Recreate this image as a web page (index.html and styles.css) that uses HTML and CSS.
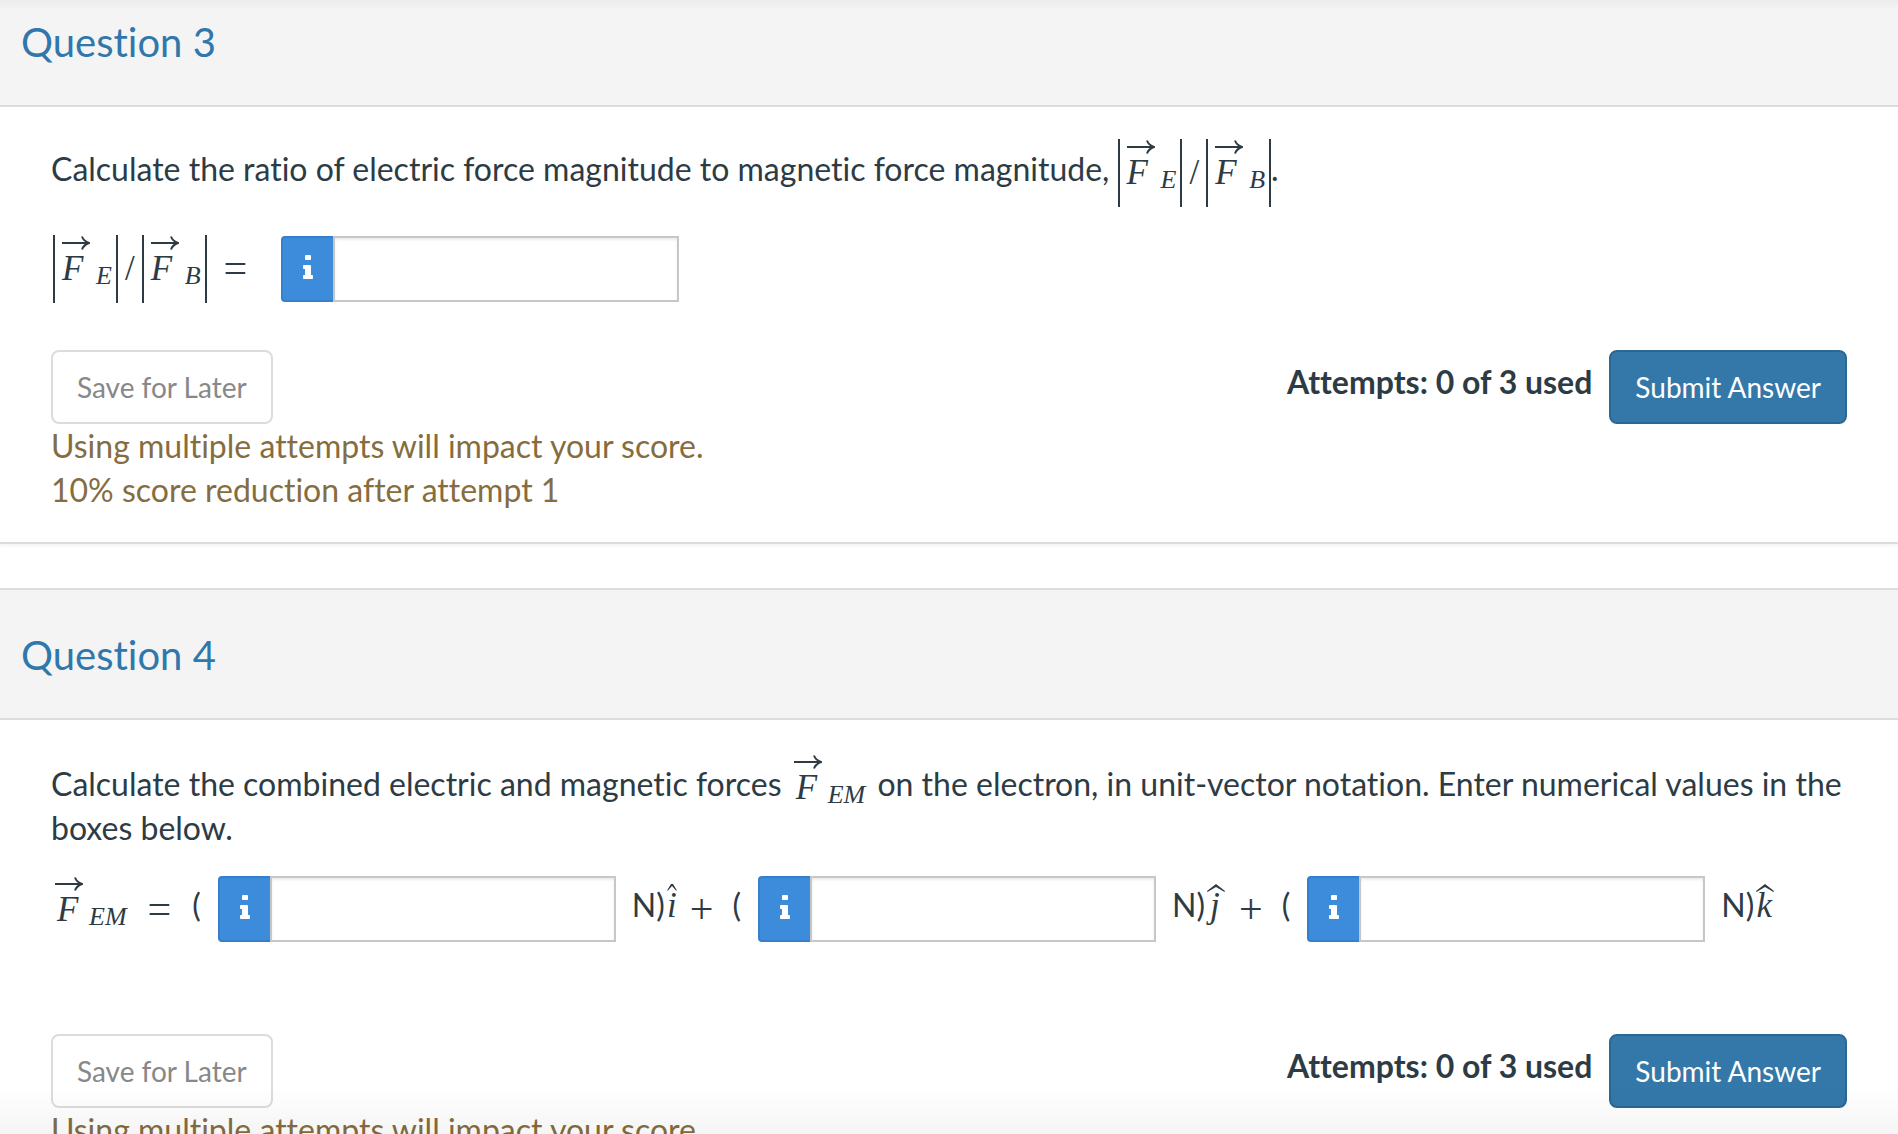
FILE: index.html
```html
<!DOCTYPE html>
<html lang="en">
<head>
  <meta charset="UTF-8" />
  <meta name="viewport" content="width=device-width, initial-scale=1.0" />
  <title>Assignment Questions</title>
  <link rel="stylesheet" href="styles.css">
</head>
<body>
  <!-- shared shapes -->
  <svg class="sprite" aria-hidden="true">
    <symbol id="arrow" viewBox="0 0 28 14">
      <path d="M0 7H26.5M20 .5Q21.500 5 27 7Q21.500 9 20 13.5" fill="none" stroke="currentColor" stroke-width="2" />
    </symbol>
    <symbol id="hat-wide" viewBox="0 0 18 8">
      <path d="M0 7L9 0L18 7L17.5 8L9 3L.5 8Z" fill="currentColor" />
    </symbol>
    <symbol id="hat" viewBox="0 0 10 7">
      <path d="M0 6.5L4 0H6L10 6.5H9L5 2L1 6.5Z" fill="currentColor" />
    </symbol>
    <symbol id="info" viewBox="0 0 640 1536">
      <path fill="currentColor" d="M640 1344v128q0 26-19 45t-45 19h-512q-26 0-45-19t-19-45v-128q0-26 19-45t45-19h64v-384h-64q-26 0-45-19t-19-45v-128q0-26 19-45t45-19h384q26 0 45 19t19 45v576h64q26 0 45 19t19 45zM512 64v192q0 26-19 45t-45 19h-256q-26 0-45-19t-19-45v-192q0-26 19-45t45-19h256q26 0 45 19t19 45z" />
    </symbol>
  </svg>

  <main class="questions">
    <section class="question">
      <header class="question-header first">
        <h2>Question 3</h2>
      </header>
      <div class="question-body ratio">
        <p class="prompt">Calculate the ratio of electric force magnitude to magnetic force magnitude, <span class="math"><span class="abs"><span class="vec">F<svg><use href="#arrow" /></svg></span><sub>E</sub></span><span class="slash">/</span><span class="abs"><span class="vec">F<svg><use href="#arrow" /></svg></span><sub>B</sub></span></span>.</p>

        <div class="answer-row">
          <span class="math"><span class="abs"><span class="vec">F<svg><use href="#arrow" /></svg></span><sub>E</sub></span><span class="slash">/</span><span class="abs"><span class="vec">F<svg><use href="#arrow" /></svg></span><sub>B</sub></span><span class="op equals">=</span></span>
          <span class="field">
            <button type="button" class="info-btn" aria-label="Answer format"><svg><use href="#info" /></svg></button>
            <input type="text" aria-label="Ratio of force magnitudes">
          </span>
        </div>

        <div class="actions">
          <button type="button" class="btn btn-save">Save for Later</button>
          <div class="submit">
            <span class="attempts">Attempts: 0 of 3 used</span>
            <button type="button" class="btn btn-submit">Submit Answer</button>
          </div>
        </div>
        <p class="warning">Using multiple attempts will impact your score.<br>10% score reduction after attempt 1</p>
      </div>
    </section>

    <section class="question">
      <header class="question-header">
        <h2>Question 4</h2>
      </header>
      <div class="question-body vector">
        <p class="prompt">Calculate the combined electric and magnetic forces <span class="math"><span class="vec wide">F<svg><use href="#arrow" /></svg></span><sub>EM</sub></span> on the electron, in unit-vector notation. Enter numerical values in the boxes below.</p>

        <div class="answer-row">
          <span class="math"><span class="vec wide">F<svg><use href="#arrow" /></svg></span><sub>EM</sub><span class="op equals">=</span></span>
          <span class="paren">(</span>
          <span class="field">
            <button type="button" class="info-btn" aria-label="i component format"><svg><use href="#info" /></svg></button>
            <input type="text" aria-label="i component in newtons">
          </span>
          <span class="unit">N)<span class="unit-vec">i<svg class="narrow"><use href="#hat" /></svg></span></span>
          <span class="math"><span class="op">+</span></span>
          <span class="paren">(</span>
          <span class="field">
            <button type="button" class="info-btn" aria-label="j component format"><svg><use href="#info" /></svg></button>
            <input type="text" aria-label="j component in newtons">
          </span>
          <span class="unit">N)<span class="unit-vec wide">j<svg><use href="#hat-wide" /></svg></span></span>
          <span class="math"><span class="op">+</span></span>
          <span class="paren">(</span>
          <span class="field">
            <button type="button" class="info-btn" aria-label="k component format"><svg><use href="#info" /></svg></button>
            <input type="text" aria-label="k component in newtons">
          </span>
          <span class="unit">N)<span class="unit-vec wide">k<svg><use href="#hat-wide" /></svg></span></span>
        </div>

        <div class="actions">
          <button type="button" class="btn btn-save">Save for Later</button>
          <div class="submit">
            <span class="attempts">Attempts: 0 of 3 used</span>
            <button type="button" class="btn btn-submit">Submit Answer</button>
          </div>
        </div>
        <p class="warning">Using multiple attempts will impact your score.<br>10% score reduction after attempt 1</p>
      </div>
    </section>
  </main>
  <div class="bottom-shade"></div>
</body>
</html>
```
FILE: styles.css
```css
* {
  box-sizing: border-box;
}

body {
  margin: 0;
  background: #fff;
  color: #2d3b45;
  font-family: Lato, "Open Sans", sans-serif;
  font-size: 32px;
  line-height: 44px;
  font-variant-ligatures: none;
}

.sprite {
  display: block;
  width: 0;
  height: 0;
}

.questions {
  height: 100vh;
  overflow-y: auto;
  scrollbar-width: none;
}

.question {
  margin-bottom: 44px;
  border-bottom: 2px solid #dcdcdc;
  box-shadow: 0 2px 3px rgba(0, 0, 0, 0.05);
}

.question-header {
  background: #f4f4f4;
  border-top: 2px solid #dcdcdc;
  border-bottom: 2px solid #dcdcdc;
  padding: 41px 21px 39px;
}

.question-header.first {
  border-top: 0;
  padding-top: 18px;
  background: linear-gradient(#ececec, #f4f4f4 10px);
}

h2 {
  margin: 0;
  color: #3077ab;
  font-size: 40px;
  font-weight: 400;
  line-height: 48px;
}

.question-body {
  padding: 32px 51px 30px;
}

.question-body.vector {
  padding-top: 42px;
}

.prompt,
.warning {
  margin: 0;
}

.warning {
  color: #856d3f;
}

/* math */
.math {
  font-family: "Liberation Serif", "Times New Roman", serif;
  font-size: 35px;
  font-style: italic;
  line-height: 34px;
  vertical-align: -3px;
  white-space: nowrap;
}

.abs {
  display: inline-block;
  border-left: 2px solid;
  border-right: 2px solid;
  padding: 0 4px 0 7px;
  line-height: 68px;
}

.vec {
  position: relative;
  display: inline-block;
  width: 34px;
  line-height: 34px;
}

.vec.wide {
  width: 38px;
  padding-left: 6px;
}

.vec svg {
  position: absolute;
  left: 0;
  top: -16px;
  width: 28px;
  height: 14px;
}

.vec.wide svg {
  left: 4px;
}

.math sub {
  font-size: 26px;
  line-height: 0;
  vertical-align: -4px;
}

.vec.wide + sub {
  padding-right: 4px;
}

.slash {
  padding: 0 7px;
  font-style: normal;
}

.op {
  padding: 0 15px 0 11px;
  font-size: 42px;
  font-style: normal;
  vertical-align: -2px;
}

.op.equals {
  padding: 0 17px;
}

/* answers */
.answer-row {
  display: flex;
  align-items: center;
  margin: 28px 0 47px;
}

.ratio .answer-row {
  padding-left: 2px;
}

.vector .answer-row {
  margin: 26px 0 92px;
}

.field {
  display: flex;
  width: 398px;
  height: 66px;
}

.ratio .field {
  margin-left: 17px;
}

.info-btn {
  display: flex;
  align-items: center;
  justify-content: center;
  width: 52px;
  padding: 0 0 4px;
  color: #fff;
  background: #3d8cdc;
  border: 2px solid #357fcb;
  border-right: 0;
  border-radius: 4px 0 0 4px;
}

.info-btn svg {
  width: 10px;
  height: 24px;
}

.field input {
  flex: 1;
  min-width: 0;
  padding: 8px 12px;
  border: 2px solid #c7c7c7;
  border-radius: 0;
  font: inherit;
  color: inherit;
  box-shadow: inset 0 2px 3px rgba(0, 0, 0, 0.08);
}

.paren {
  padding: 0 17px 8px 4px;
}

.unit {
  padding: 0 0 8px 16px;
}

.unit-vec {
  position: relative;
  display: inline-block;
  width: 14px;
  font-family: "Liberation Serif", "Times New Roman", serif;
  font-size: 35px;
  font-style: italic;
  text-align: center;
}

.unit-vec.wide {
  width: 23px;
  padding-right: 3px;
}

.unit-vec svg {
  position: absolute;
  left: 2px;
  top: 0;
  width: 18px;
  height: 8px;
}

.unit-vec svg.narrow {
  width: 10px;
  height: 7px;
}

/* footer of each question */
.actions,
.submit {
  display: flex;
  justify-content: space-between;
}

.attempts {
  margin: 10px 17px 0 0;
  font-weight: 700;
}

.btn {
  height: 74px;
  padding: 0 24px;
  border: 2px solid #dcdcdc;
  border-radius: 8px;
  font-family: inherit;
  font-size: 28px;
  line-height: 40px;
}

.btn-save {
  color: #888;
  background: #fff;
}

.btn-submit {
  color: #fff;
  background: #3478aa;
  border-color: #2b6793;
}

.bottom-shade {
  position: fixed;
  left: 0;
  right: 0;
  bottom: 0;
  height: 48px;
  background: linear-gradient(transparent, rgba(0, 0, 0, 0.04));
  pointer-events: none;
}
```
